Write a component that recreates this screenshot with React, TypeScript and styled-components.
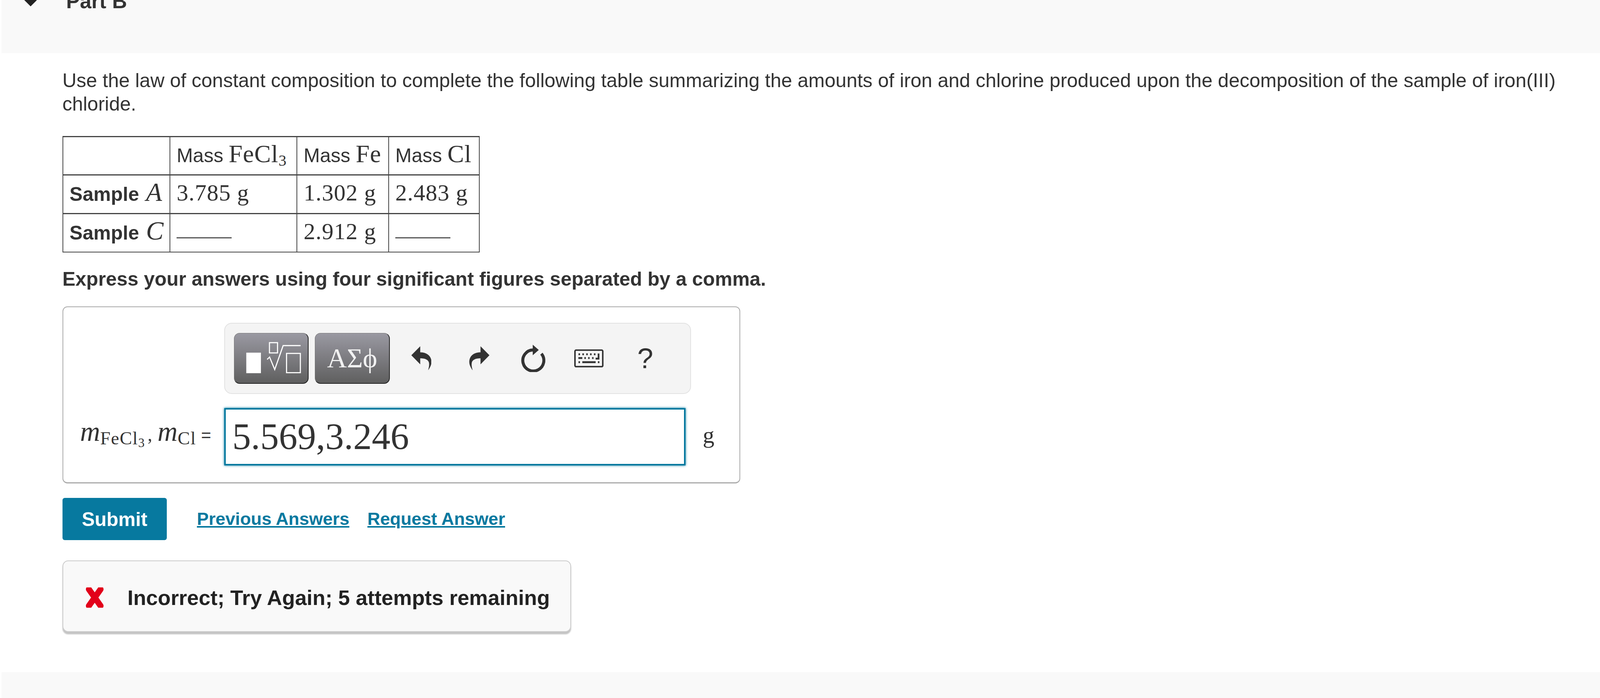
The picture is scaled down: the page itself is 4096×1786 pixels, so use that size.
import React from "react";
import styled, { createGlobalStyle } from "styled-components";

// all sizes are measured on the 4255px reference, u() brings them down to the window
const u = (n: number) => `${(n * 0.962).toFixed(2)}px`;

const sans = `"Liberation Sans", Arial, sans-serif`;
const serif = `"Liberation Serif", "Times New Roman", serif`;
const teal = "#07799f";

const GlobalStyle = createGlobalStyle`
  html, body {
    margin: 0;
    padding: 0;
    background: #fff;
    overflow: hidden;
  }
  body {
    font-family: ${sans};
    font-size: ${u(52)};
    line-height: ${u(63)};
    color: #333;
  }
`;

const Page = styled.div`
  display: flex;
  flex-direction: column;
  width: 100%;
  height: 100vh;
  overflow: hidden;
`;

const PartHeader = styled.div`
  display: flex;
  align-items: flex-start;
  flex-shrink: 0;
  height: ${u(141)};
  margin-left: ${u(4)};
  padding-left: ${u(60)};
  background: #f9f9f9;
  overflow: hidden;
`;

const Caret = styled.svg`
  width: ${u(34)};
  height: ${u(17)};
  flex-shrink: 0;
`;

const PartTitle = styled.h2`
  margin: ${u(-28)} 0 0 ${u(78)};
  font-size: ${u(55)};
  line-height: ${u(63)};
  font-weight: 700;
  color: #333;
`;

const Content = styled.main`
  display: flex;
  flex-direction: column;
  align-items: flex-start;
  flex: 1;
  padding: ${u(41.5)} ${u(100)} 0 ${u(166)};
`;

const Prompt = styled.p`
  margin: 0;
`;

const DataTable = styled.table`
  margin-top: ${u(53)};
  width: ${u(1111)};
  table-layout: fixed;
  border-collapse: collapse;
  border: ${u(3)} solid #444;
`;

const Cell = styled.td<{ $w?: number }>`
  box-sizing: border-box;
  width: ${({ $w }) => ($w ? u($w) : "auto")};
  height: ${u(102.5)};
  padding: 0 0 ${u(5)} ${u(17)};
  border-left: ${u(2.5)} solid #444;
  border-top: ${u(3.5)} solid #444;
  white-space: nowrap;
  vertical-align: middle;
`;

const RowHead = styled.strong`
  font-weight: 700;
`;

const M = styled.span<{ $large?: boolean }>`
  font-family: ${serif};
  font-size: ${({ $large }) => u($large ? 66 : 62)};
  letter-spacing: ${u(1)};
`;

const MI = styled(M)`
  margin-left: ${u(4)};
  font-style: italic;
  font-size: ${u(70)};
  font-weight: 400;
`;

const MSub = styled.sub`
  font-family: ${serif};
  font-size: ${u(42)};
  line-height: 0;
  vertical-align: ${u(-9)};
`;

const Blank = styled.span`
  display: inline-block;
  width: ${u(146)};
  height: ${u(40)};
  border-bottom: ${u(3.5)} solid #555;
`;

const Hint = styled.p`
  margin: ${u(40)} 0 0;
  font-weight: 700;
`;

const AnswerBox = styled.section`
  display: flex;
  flex-direction: column;
  box-sizing: border-box;
  width: ${u(1804)};
  height: ${u(471)};
  margin-top: ${u(40)};
  padding: ${u(42)} 0 0 ${u(45)};
  border: ${u(2.5)} solid #aaa;
  border-bottom-width: ${u(4)};
  border-radius: ${u(13)};
`;

const Toolbar = styled.div`
  display: flex;
  align-items: center;
  box-sizing: border-box;
  width: ${u(1242)};
  height: ${u(189)};
  margin-left: ${u(384)};
  padding-left: ${u(23)};
  background: #f4f4f4;
  border: ${u(2.5)} solid #e2e2e2;
  border-radius: ${u(20)};
`;

const PaletteButton = styled.button<{ $gap?: number }>`
  display: flex;
  align-items: center;
  justify-content: center;
  box-sizing: border-box;
  width: ${u(199)};
  height: ${u(135)};
  margin: 0 0 0 ${({ $gap }) => u($gap ?? 0)};
  padding: 0;
  color: #f1f1f1;
  font-family: ${serif};
  font-size: ${u(73)};
  line-height: 1;
  background: linear-gradient(#9a99a2, #5f5f5f);
  border: ${u(2)} solid #777;
  border-right: ${u(3)} solid #222;
  border-bottom: ${u(3)} solid #222;
  border-radius: ${u(15)};
`;

const ToolIcon = styled.svg<{ $gap: number; $w: number; $h: number }>`
  flex-shrink: 0;
  width: ${({ $w }) => u($w)};
  height: ${({ $h }) => u($h)};
  margin-left: ${({ $gap }) => u($gap)};
  fill: #333;
`;

const HelpMark = styled.span`
  margin-left: ${u(90)};
  font-size: ${u(76)};
  line-height: 1;
  color: #333;
`;

const AnswerRow = styled.div`
  display: flex;
  align-items: center;
  margin-top: ${u(38)};
`;

const Label = styled.label`
  display: flex;
  align-items: baseline;
  width: ${u(384)};
  margin-bottom: ${u(14)};
  flex-shrink: 0;
  white-space: nowrap;
  color: #333;
`;

const LabelM = styled.span`
  font-family: ${serif};
  font-style: italic;
  font-size: ${u(74)};
`;

const LabelSub = styled.span`
  position: relative;
  top: ${u(10)};
  font-family: ${serif};
  font-size: ${u(49)};
  letter-spacing: ${u(1.5)};
`;

const LabelTiny = styled.span`
  position: relative;
  top: ${u(17)};
  font-family: ${serif};
  font-size: ${u(34)};
`;

const LabelComma = styled.span`
  margin: 0 ${u(14)} 0 ${u(8)};
  font-family: ${serif};
  font-size: ${u(50)};
`;

const Equals = styled.span`
  margin-left: ${u(13)};
  font-size: ${u(46)};
`;

const AnswerInput = styled.input`
  box-sizing: border-box;
  width: ${u(1227)};
  height: ${u(152)};
  padding: 0 0 0 ${u(17)};
  font-family: ${serif};
  font-size: ${u(99)};
  color: #333;
  background: #fff;
  border: ${u(4.5)} solid ${teal};
  border-radius: 0;
  outline: none;
  box-shadow: 0 0 ${u(6)} ${teal};
`;

const Unit = styled.span`
  margin: 0 0 ${u(8)} ${u(46)};
  font-family: ${serif};
  font-size: ${u(62)};
`;

const Actions = styled.div`
  display: flex;
  align-items: center;
  margin-top: ${u(39)};
`;

const SubmitButton = styled.button`
  box-sizing: border-box;
  width: ${u(278)};
  height: ${u(112)};
  padding: 0;
  color: #fff;
  font-family: ${sans};
  font-size: ${u(51.5)};
  font-weight: 700;
  background: ${teal};
  border: 0;
  border-radius: ${u(6)};
`;

const ActionLink = styled.a<{ $gap: number }>`
  margin-left: ${({ $gap }) => u($gap)};
  color: ${teal};
  font-size: ${u(47)};
  font-weight: 700;
  text-decoration: underline;
`;

const Feedback = styled.div`
  display: flex;
  align-items: center;
  box-sizing: border-box;
  width: ${u(1354)};
  height: ${u(190)};
  margin-top: ${u(54)};
  padding: ${u(8)} 0 0 ${u(57)};
  background: #f9f9f9;
  border: ${u(2.5)} solid #ccc;
  border-radius: ${u(15)};
  box-shadow: 0 ${u(6)} ${u(3)} #c4c4c4;
`;

const CrossIcon = styled.svg`
  width: ${u(53)};
  height: ${u(54)};
  flex-shrink: 0;
`;

const FeedbackText = styled.strong`
  margin-left: ${u(61)};
  color: #222;
  font-size: ${u(56)};
  font-weight: 700;
`;

const NextPart = styled.div`
  flex-shrink: 0;
  height: ${u(69)};
  margin-left: ${u(4)};
  background: #f9f9f9;
`;

const UNDO =
  "M0 24 L23.7 0 V16 C42 16 53.6 26 53.6 42 C53.6 50 49 58 44.6 64 C47 56 48 50 47 44 C45.5 36 37 32 23.7 32 V48 Z";

const TemplatesGlyph = () => (
  <svg viewBox="60 42 598 406" width="100%" height="100%" fill="none" stroke="#fff" strokeWidth="9">
    <rect x="155" y="200" width="120" height="168" fill="#fff" stroke="none" />
    <rect x="345" y="118" width="66" height="84" />
    <path d="M326 256 L346 236 L388 338 L457 142 H600" />
    <rect x="485" y="206" width="113" height="158" />
  </svg>
);

const KeyboardIcon = () => (
  <ToolIcon $gap={77} $w={78} $h={48} viewBox="0 0 78 48">
    <rect x="2" y="2" width="74" height="44" rx="3" fill="none" stroke="#333" strokeWidth="4" />
    {[13.4, 23.7, 34, 44.2, 54.5].map((x) => (
      <rect key={x} x={x - 2} y="10.5" width="4" height="5" />
    ))}
    <path d="M62.5 11 H67 V27 H57 V22 H62.5 Z" />
    <rect x="11" y="20.5" width="10.5" height="5" />
    {[29, 39, 49.5].map((x) => (
      <rect key={x} x={x - 2} y="20.5" width="4" height="5" />
    ))}
    <rect x="11.4" y="31.5" width="4" height="5" />
    <rect x="21.5" y="31.5" width="35.5" height="5" />
    <rect x="63" y="31.5" width="4" height="5" />
  </ToolIcon>
);

export default function App() {
  return (
    <Page>
      <GlobalStyle />
      <PartHeader>
        <Caret viewBox="0 0 34 17">
          <path d="M0 0 H34 L17 17 Z" fill="#222" />
        </Caret>
        <PartTitle>Part B</PartTitle>
      </PartHeader>

      <Content>
        <Prompt>
          Use the law of constant composition to complete the following table summarizing the amounts of
          iron and chlorine produced upon the decomposition of the sample of iron(III) chloride.
        </Prompt>

        <DataTable>
          <tbody>
            <tr>
              <Cell $w={285} />
              <Cell $w={338}>
                Mass <M $large>FeCl</M>
                <MSub>3</MSub>
              </Cell>
              <Cell $w={244}>
                Mass <M $large>Fe</M>
              </Cell>
              <Cell>
                Mass <M $large>Cl</M>
              </Cell>
            </tr>
            <tr>
              <Cell>
                <RowHead>Sample</RowHead> <MI>A</MI>
              </Cell>
              <Cell>
                <M>3.785 g</M>
              </Cell>
              <Cell>
                <M>1.302 g</M>
              </Cell>
              <Cell>
                <M>2.483 g</M>
              </Cell>
            </tr>
            <tr>
              <Cell>
                <RowHead>Sample</RowHead> <MI>C</MI>
              </Cell>
              <Cell>
                <Blank />
              </Cell>
              <Cell>
                <M>2.912 g</M>
              </Cell>
              <Cell>
                <Blank />
              </Cell>
            </tr>
          </tbody>
        </DataTable>

        <Hint>Express your answers using four significant figures separated by a comma.</Hint>

        <AnswerBox>
          <Toolbar>
            <PaletteButton>
              <TemplatesGlyph />
            </PaletteButton>
            <PaletteButton $gap={17}>ΑΣϕ</PaletteButton>
            <ToolIcon $gap={57} $w={54} $h={64} viewBox="0 0 54 64">
              <path d={UNDO} />
            </ToolIcon>
            <ToolIcon $gap={100} $w={54} $h={64} viewBox="0 0 54 64">
              <path d={UNDO} transform="translate(54 0) scale(-1 1)" />
            </ToolIcon>
            <ToolIcon $gap={85} $w={64} $h={73} viewBox="0 0 64 73">
              <path d="M32 14 A28 28 0 1 0 54 24" fill="none" stroke="#333" strokeWidth="8" />
              <path d="M31 0 L47 14 L31 28 Z" />
            </ToolIcon>
            <KeyboardIcon />
            <HelpMark>?</HelpMark>
          </Toolbar>

          <AnswerRow>
            <Label>
              <LabelM>m</LabelM>
              <LabelSub>FeCl</LabelSub>
              <LabelTiny>3</LabelTiny>
              <LabelComma>,</LabelComma>
              <LabelM>m</LabelM>
              <LabelSub>Cl</LabelSub>
              <Equals>=</Equals>
            </Label>
            <AnswerInput readOnly value="5.569,3.246" />
            <Unit>g</Unit>
          </AnswerRow>
        </AnswerBox>

        <Actions>
          <SubmitButton>Submit</SubmitButton>
          <ActionLink $gap={80}>Previous Answers</ActionLink>
          <ActionLink $gap={48}>Request Answer</ActionLink>
        </Actions>

        <Feedback>
          <CrossIcon viewBox="0 0 53 54">
            <path d="M11 5 L42 49 M42 5 L11 49" stroke="#e2001a" strokeWidth="16" strokeLinecap="round" />
          </CrossIcon>
          <FeedbackText>Incorrect; Try Again; 5 attempts remaining</FeedbackText>
        </Feedback>
      </Content>

      <NextPart />
    </Page>
  );
}
